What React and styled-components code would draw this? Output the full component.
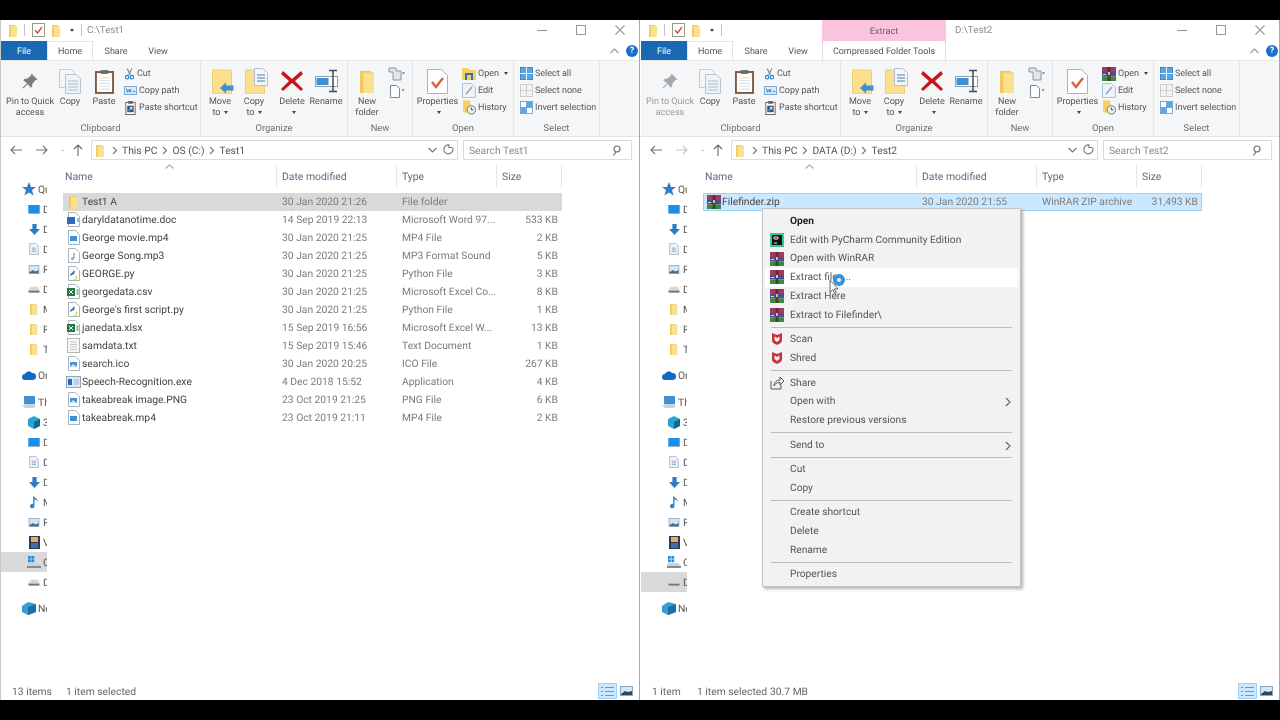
import styled, { createGlobalStyle } from "styled-components";

const GlobalStyle = createGlobalStyle`
  html, body { margin: 0; padding: 0; background: #000; }
  * { box-sizing: border-box; }
`;

const Screen = styled.div`
  width: 1280px;
  height: 720px;
  padding: 20px 0;
  background: #000;
  display: flex;
  font-family: Roboto, "Open Sans", sans-serif;
  font-size: 10.3px;
  text-rendering: geometricPrecision;
  color: #4a4a4a;
  overflow: hidden;
`;

const Window = styled.div`
  position: relative;
  width: 640px;
  height: 680px;
  background: #fff;
  display: flex;
  flex-direction: column;
  border-left: 1px solid ${(p) => (p.$right ? "#fff" : "#c8c8c8")};
  border-right: 1px solid #a8a8a8;
  filter: blur(0.45px);
`;

/* title bar */
const TitleBar = styled.div`
  height: 21px;
  flex: none;
  display: flex;
  align-items: center;
  padding-left: 8px;
  padding-bottom: 1px;
  color: #8d8d8d;
`;
const QuickBar = styled.div`
  width: 78px;
  flex: none;
  display: flex;
  align-items: center;
  gap: 7px;
`;
const Pipe = styled.span`
  width: 1px;
  height: 12px;
  background: #c4c4c4;
`;
const ContextTitle = styled.div`
  width: 124px;
  height: 21px;
  margin-left: 95px;
  flex: none;
  background: #fbc4de;
  color: #666;
  font-size: 9.2px;
  display: flex;
  align-items: center;
  justify-content: center;
  padding-top: 2px;
`;
const TitleText = styled.span`
  margin-left: ${(p) => p.$offset}px;
  font-size: 9.8px;
`;
const WinControls = styled.div`
  margin-left: auto;
  display: flex;
  align-items: center;
  height: 100%;
`;
const WinButton = styled.div`
  width: 39px;
  display: flex;
  justify-content: center;
  align-items: center;
`;

/* tabs */
const TabRow = styled.div`
  height: 19px;
  flex: none;
  display: flex;
  align-items: center;
  font-size: 9px;
`;
const Tab = styled.div`
  height: 19px;
  width: ${(p) => p.$w}px;
  display: flex;
  align-items: center;
  justify-content: center;
  padding-top: 2px;
  color: ${(p) => (p.$file ? "#fff" : "#555")};
  background: ${(p) => (p.$file ? "#1a68b4" : "#fff")};
  border: ${(p) => (p.$active ? "1px solid #e4e4e4" : "none")};
  border-bottom: none;
`;
const ContextTab = styled(Tab)`
  margin-left: 5px;
  border-left: 1px solid #ddd;
  border-right: 1px solid #ddd;
  color: #555;
  white-space: nowrap;
`;
const TabEnd = styled.div`
  margin-left: auto;
  display: flex;
  align-items: center;
  gap: 7px;
  padding-right: 1px;
`;
const Help = styled.span`
  width: 12px;
  height: 12px;
  border-radius: 50%;
  background: #1673c8;
  color: #fff;
  font-size: 9px;
  font-weight: 700;
  display: flex;
  align-items: center;
  justify-content: center;
`;

/* ribbon */
const Ribbon = styled.div`
  height: 77px;
  flex: none;
  display: flex;
  background: #f5f6f7;
  border-top: 1px solid #e8e8e8;
  border-bottom: 1px solid #e2e3e4;
  font-size: 9px;
  color: #555;
`;
const Group = styled.div`
  width: ${(p) => p.$w}px;
  flex: none;
  display: flex;
  flex-direction: column;
  border-right: 1px solid #e4e5e6;
`;
const GroupBody = styled.div`
  flex: 1;
  display: flex;
  min-height: 0;
  padding-left: ${(p) => p.$pad || 0}px;
`;
const GroupLabel = styled.div`
  height: 14px;
  text-align: center;
  color: #6e6e6e;
  line-height: 14px;
  font-size: 9.4px;
`;
const LargeButton = styled.div`
  width: ${(p) => p.$w}px;
  flex: none;
  padding-top: 5px;
  display: flex;
  flex-direction: column;
  align-items: center;
  color: ${(p) => (p.$off ? "#9a9a9a" : "#555")};
  white-space: nowrap;
`;
const LargeIcon = styled.div`
  height: 31px;
  display: flex;
  align-items: center;
  justify-content: center;
  padding-bottom: 1px;
`;
const LargeLabel = styled.div`
  line-height: 11px;
  text-align: center;
`;
const SmallColumn = styled.div`
  padding-top: 4px;
  padding-left: ${(p) => p.$pad || 0}px;
  display: flex;
  flex-direction: column;
  flex: none;
`;
const SmallButton = styled.div`
  height: 17px;
  display: flex;
  align-items: center;
  gap: 2px;
  white-space: nowrap;
`;
const Caret = styled.span`
  display: inline-block;
  width: 0;
  height: 0;
  margin-left: 3px;
  vertical-align: middle;
  border-left: 2.5px solid transparent;
  border-right: 2.5px solid transparent;
  border-top: 3px solid #444;
`;

/* address row */
const AddressRow = styled.div`
  height: 26px;
  flex: none;
  display: flex;
  align-items: center;
  padding: 0 7px 0 8px;
`;
const NavIcons = styled.div`
  width: 82px;
  flex: none;
  display: flex;
  align-items: center;
`;
const NavSlot = styled.span`
  width: ${(p) => p.$w}px;
  display: flex;
  justify-content: center;
`;
const AddressBox = styled.div`
  width: 367px;
  height: 20px;
  flex: none;
  display: flex;
  align-items: center;
  gap: 4.5px;
  padding: 0 3px 0 4px;
  border: 1px solid #dcdcdc;
  color: #555;
`;
const Crumb = styled.span`
  display: flex;
  align-items: center;
  gap: 4.5px;
  &:first-of-type {
    margin-left: 3px;
  }
`;
const AddressEnd = styled.span`
  margin-left: auto;
  display: flex;
  align-items: center;
  gap: 5px;
`;
const SearchBox = styled.div`
  width: 169px;
  height: 20px;
  margin-left: 5px;
  flex: none;
  display: flex;
  align-items: center;
  justify-content: space-between;
  padding: 0 7px 0 5px;
  border: 1px solid #dcdcdc;
  color: #8b8b8b;
`;

/* main area */
const Main = styled.div`
  flex: 1;
  min-height: 0;
  display: flex;
`;
const Sidebar = styled.div`
  width: 46px;
  flex: none;
  padding-top: 16px;
  overflow: hidden;
`;
const NavItem = styled.div`
  height: 20px;
  margin-top: ${(p) => p.$gap || 0}px;
  display: flex;
  align-items: center;
  gap: 1px;
  padding-left: ${(p) => (p.$top ? 20 : 25)}px;
  background: ${(p) => (p.$on ? "#d9d9d9" : "transparent")};
  white-space: nowrap;
  color: #555;
`;
const NavGlyph = styled.span`
  width: 16px;
  height: 16px;
  flex: none;
  display: flex;
  align-items: center;
  justify-content: center;
`;
const FileArea = styled.div`
  position: relative;
  flex: 1;
  padding: 2px 0 0 16px;
`;
const SortMark = styled.span`
  position: absolute;
  left: 118px;
  top: 1px;
  display: flex;
`;
const columns = "214px 120px 100px 65px";
const HeaderRow = styled.div`
  display: grid;
  grid-template-columns: ${columns};
  width: 499px;
  height: 23px;
  margin-bottom: 5px;
  color: #5b6c80;
  font-size: 10.4px;
`;
const HeaderCell = styled.div`
  display: flex;
  align-items: center;
  padding-left: ${(p) => (p.$first ? 2 : 5)}px;
  border-right: 1px solid #e5e5e5;
`;
const Row = styled.div`
  display: grid;
  grid-template-columns: ${columns};
  width: 499px;
  height: 18px;
  align-items: center;
  padding-bottom: 1px;
  background: ${(p) => (p.$sel === "gray" ? "#d9d9d9" : p.$sel === "blue" ? "#cce8ff" : "transparent")};
  outline: ${(p) => (p.$sel === "blue" ? "1px solid #99d1ff" : "none")};
  outline-offset: -1px;
`;
const NameCell = styled.div`
  display: flex;
  align-items: center;
  gap: 1px;
  padding-left: 3px;
  color: #444;
  white-space: nowrap;
`;
const FileGlyph = styled.span`
  width: 15px;
  height: 16px;
  flex: none;
  display: flex;
  align-items: center;
  justify-content: center;
`;
const Cell = styled.div`
  padding-left: 5px;
  white-space: nowrap;
  overflow: hidden;
  color: #7c7c7c;
`;
const SizeCell = styled(Cell)`
  text-align: right;
  padding-right: 4px;
`;

/* status bar */
const StatusBar = styled.div`
  height: 18px;
  flex: none;
  display: flex;
  align-items: center;
  padding-left: 11px;
  color: #666;
  white-space: nowrap;
`;
const StatusText = styled.span`
  width: ${(p) => p.$w}px;
  flex: none;
`;
const ViewButtons = styled.div`
  margin-left: auto;
  display: flex;
  align-items: center;
  padding-right: 3px;
`;
const ViewButton = styled.span`
  width: 19px;
  height: 16px;
  display: flex;
  align-items: center;
  justify-content: center;
  background: ${(p) => (p.$on ? "#cce8ff" : "transparent")};
  border: 1px solid ${(p) => (p.$on ? "#99d1ff" : "transparent")};
`;

/* context menu */
const Menu = styled.div`
  position: absolute;
  left: 121px;
  top: 188px;
  width: 259px;
  height: 379px;
  padding: 3px 2px;
  background: #f2f2f2;
  border: 1px solid #c4c4c4;
  box-shadow: 2px 2px 3px rgba(0, 0, 0, 0.3);
  color: #555;
  font-size: 10.2px;
  z-index: 2;
`;
const MenuItem = styled.div`
  position: relative;
  height: 18.8px;
  display: flex;
  align-items: center;
  padding-left: 25px;
  background: ${(p) => (p.$hover ? "#fff" : "transparent")};
  font-weight: ${(p) => (p.$bold ? 700 : 400)};
  color: ${(p) => (p.$bold ? "#222" : "#555")};
`;
const MenuIcon = styled.span`
  position: absolute;
  left: 5px;
  top: 2px;
  width: 14px;
  height: 14px;
  display: flex;
`;
const MenuArrow = styled.span`
  position: absolute;
  right: 7px;
  top: 5px;
  display: flex;
`;
const MenuSep = styled.div`
  height: 5.65px;
  display: flex;
  align-items: center;
  padding: 0 6px;
  &::before {
    content: "";
    flex: 1;
    height: 1px;
    background: #bdbdbd;
  }
`;
const Pointer = styled.span`
  position: absolute;
  left: 186px;
  top: 252px;
  display: flex;
  z-index: 3;
`;

/* drawings */
const Folder = ({ h = 13 }) => (
  <svg width={h * 0.62} height={h} viewBox="0 0 9 13" preserveAspectRatio="none">
    <path d="M0 1h6l2 1v11H0z" fill="#f3c95f" />
    <path d="M2 2h7v11H2z" fill="#fbe08f" />
  </svg>
);

const Check = () => (
  <svg width="13" height="14" viewBox="0 0 13 14">
    <rect x=".5" y=".5" width="12" height="13" fill="#fff" stroke="#999" />
    <path d="M3 7l2.5 3L10 4" fill="none" stroke="#d2513a" strokeWidth="1.4" />
  </svg>
);

const Pin = ({ off }) => (
  <svg width="18" height="18" viewBox="0 0 24 24">
    <path
      d="M14 2l8 8-3 1-4 5 0 3-2 2-4-5-6 6-1-1 6-6-5-4 2-2 3 0 5-4z"
      fill={off ? "#a4aab2" : "#7d7d7d"}
    />
  </svg>
);

const CopyLarge = () => (
  <svg width="22" height="26" viewBox="0 0 22 26">
    <path d="M.5 1.5h12l3 3v15H.5z" fill="#f4f7fa" stroke="#c2ccd7" />
    <path d="M6.5 6.5h11l4 4v15h-15z" fill="#eef3f8" stroke="#b5c2d0" />
    <path d="M9 13h10M9 16h10M9 19h10M9 22h10" stroke="#a9bed4" />
  </svg>
);

const PasteLarge = () => (
  <svg width="19" height="25" viewBox="0 0 20 26">
    <rect x="1" y="3" width="18" height="22" fill="#fff" stroke="#7a5a44" strokeWidth="2" />
    <rect x="6" y="1" width="8" height="4" fill="#6b6b6b" />
    <path d="M4 9h12M4 12h12M4 15h12M4 18h12M4 21h12" stroke="#d8dde3" />
  </svg>
);

const Cut = () => (
  <svg width="11" height="14" viewBox="0 0 14 14">
    <path d="M4 0l4 8M10 0L6 8" stroke="#7b8794" strokeWidth="1.4" />
    <circle cx="4" cy="11" r="2.2" fill="none" stroke="#2f7dc4" strokeWidth="1.4" />
    <circle cx="10" cy="11" r="2.2" fill="none" stroke="#2f7dc4" strokeWidth="1.4" />
  </svg>
);

const CopyPath = () => (
  <svg width="13" height="9" viewBox="0 0 15 10">
    <rect x=".5" y=".5" width="14" height="9" fill="#dcecf9" stroke="#6a9fd0" />
    <path d="M3 3l1 4 1.5-3L7 7l1-4" fill="none" stroke="#2b6aa6" />
    <path d="M10 6h3" stroke="#2b6aa6" />
  </svg>
);

const PasteShortcut = () => (
  <svg width="13" height="14" viewBox="0 0 13 15">
    <rect x="1.5" y="1.500" width="10" height="13" fill="#fff" stroke="#7a5a44" />
    <rect x="4" y="0" width="5" height="3" fill="#666" />
    <rect x="3" y="5" width="7" height="7" fill="#2f5d8c" />
    <path d="M5 10l3-3M6 7h2v2" stroke="#fff" fill="none" />
  </svg>
);

const MoveTo = () => (
  <svg width="28" height="25" viewBox="0 0 28 25">
    <rect x="6.500" y="1" width="19" height="24" fill="#fbe08f" stroke="#f0cd72" />
    <path d="M14 19l6-5.500v3h7.500v5H20v3z" fill="#3d8fd6" />
  </svg>
);

const CopyTo = () => (
  <svg width="28" height="26" viewBox="0 0 28 26">
    <rect x="5.500" y="2" width="19" height="24" fill="#fbe08f" stroke="#f0cd72" />
    <path d="M14.500.5h8l5 4v13h-13z" fill="#f4f7fa" stroke="#b3bfcc" />
    <path d="M17 7h8M17 10h8M17 13h8" stroke="#7fa6cc" strokeWidth="1.4" />
  </svg>
);

const DeleteX = () => (
  <svg width="22" height="22" viewBox="0 0 22 22">
    <path d="M2 1l9 8 9-8 2 3-8 7 8 8-2 2-9-8-9 8-2-2 8-8-8-7z" fill="#c9141e" />
  </svg>
);

const RenameIcon = () => (
  <svg width="26" height="24" viewBox="0 0 26 24">
    <rect x="2.500" y="7.500" width="22" height="10" fill="#fff" stroke="#8aa0b5" />
    <rect x="3.500" y="9" width="12" height="7" fill="#3d8fd6" />
    <path d="M16 1.500h8M20 1.500v21M16 22.500h8" stroke="#4a4a4a" strokeWidth="1.5" fill="none" />
  </svg>
);

const NewItem = () => (
  <svg width="17" height="14" viewBox="0 0 17 14">
    <path d="M1 1h7v3h5v9H5V5H1z" fill="#dfe6ed" stroke="#8c98a5" />
    <path d="M14 5.500h3l-1.500 1.500z" fill="#444" />
  </svg>
);

const EasyAccess = () => (
  <svg width="17" height="14" viewBox="0 0 17 14">
    <path d="M2.5 1.5h6l3 3v9h-9z" fill="#fff" stroke="#7a8794" />
    <path d="M13.5 5.5l3 0-1.5 1.5z" fill="#444" />
  </svg>
);

const Properties = () => (
  <svg width="21" height="25" viewBox="0 0 21 25">
    <path d="M.5.5h14l6 6v18H.5z" fill="#fff" stroke="#a8b3bf" />
    <path d="M5 13l4 5 7-9" fill="none" stroke="#d9603f" strokeWidth="2.4" />
  </svg>
);

const OpenFolder = () => (
  <svg width="14" height="13" viewBox="0 0 14 13">
    <path d="M0 1h6l2 2h6v10H0z" fill="#f5cf6b" />
    <path d="M3 6h8v7H9V8H5v5H3z" fill="#2f7a8c" />
  </svg>
);

const WinRar = ({ s = 14 }) => (
  <svg width={s} height={s} viewBox="0 0 14 14">
    <rect x="0" y="0" width="14" height="5" fill="#a33a5c" />
    <rect x="0" y="5" width="14" height="4.5" fill="#4d4aa0" />
    <rect x="0" y="9.5" width="14" height="4.5" fill="#3d8a3a" />
    <rect x="5.500" y="0" width="3" height="14" fill="#3a2530" opacity=".65" />
    <rect x="6" y="5" width="2" height="3" fill="#e8c850" />
    <rect x="1" y="7" width="3" height="1" fill="#d7d7e8" />
  </svg>
);

const EditIcon = () => (
  <svg width="14" height="15" viewBox="0 0 14 15">
    <path d="M.5.5h9l4 4v10H.5z" fill="#eef3f8" stroke="#a9c3dc" />
    <path d="M4 11l6-7" stroke="#7fa6cc" strokeWidth="1.4" />
  </svg>
);

const HistoryIcon = () => (
  <svg width="14" height="15" viewBox="0 0 15 15">
    <rect x="1" y="0" width="8" height="13" fill="#f5cf6b" />
    <circle cx="10" cy="10" r="4.5" fill="#e8f0e8" stroke="#4b8a4b" />
    <path d="M10 7.5V10h2" stroke="#444" fill="none" />
  </svg>
);

const SelectAll = () => (
  <svg width="13" height="13" viewBox="0 0 15 15">
    <rect x=".5" y=".5" width="14" height="14" fill="#5aa6e0" stroke="#2f7dc4" />
    <path d="M7.5 0v15M0 7.5h15" stroke="#fff" />
  </svg>
);

const SelectNone = () => (
  <svg width="13" height="13" viewBox="0 0 15 15">
    <rect x=".5" y=".5" width="14" height="14" fill="#f4f4f4" stroke="#c4c8cc" />
    <path d="M7.5 0v15M0 7.5h15" stroke="#c4c8cc" />
  </svg>
);

const Invert = () => (
  <svg width="13" height="13" viewBox="0 0 15 15">
    <rect x=".5" y=".5" width="14" height="14" fill="#fff" stroke="#5f9ed6" />
    <rect x="8" y="1" width="6" height="6" fill="#5aa6e0" />
    <rect x="1" y="8" width="6" height="6" fill="#5aa6e0" />
    <path d="M7.5 0v15M0 7.5h15" stroke="#5f9ed6" />
  </svg>
);

const Line = ({ w = 16, h = 12, d, color = "#666", sw = 1.1 }) => (
  <svg width={w} height={h} viewBox={`0 0 ${w} ${h}`}>
    <path d={d} fill="none" stroke={color} strokeWidth={sw} />
  </svg>
);

const Page = ({ children, line = "#aab4bf" }) => (
  <svg width="13" height="15" viewBox="0 0 13 15">
    <path d="M1.5.5h7l4 4v10h-11z" fill="#fff" stroke={line} />
    {children}
  </svg>
);

const fileIcons = {
  folder: <Folder h={14} />,
  word: (
    <Page>
      <rect x="0" y="5" width="8" height="7" fill="#2b6cb8" />
      <path d="M10 7h2M10 9h2" stroke="#2b6cb8" />
    </Page>
  ),
  video: (
    <Page>
      <rect x="3" y="6" width="7" height="5" fill="#3d8fd6" />
    </Page>
  ),
  audio: (
    <Page>
      <path d="M7 5v5" stroke="#5f7c9a" />
      <circle cx="5.5" cy="10.5" r="1.6" fill="#8fb0d0" />
    </Page>
  ),
  python: (
    <Page>
      <path d="M3 10c0-3 3-3 4-6 1 1 1 3 0 4z" fill="#3b75ac" />
      <path d="M5 14c3 0 4-2 4-5 2 1 1 5-1 5z" fill="#f0c63c" />
    </Page>
  ),
  excel: (
    <Page>
      <rect x="0" y="4" width="8" height="8" fill="#1f7a45" />
      <path d="M2 6l4 4M6 6l-4 4" stroke="#fff" />
      <path d="M9.5 6h2M9.5 8h2M9.5 10h2" stroke="#1f7a45" />
    </Page>
  ),
  text: (
    <svg width="13" height="15" viewBox="0 0 13 15">
      <rect x=".5" y=".5" width="12" height="14" fill="#f8f8f8" stroke="#b7b7b7" />
      <path d="M3 4h7M3 6.500h7M3 9h7M3 11.500h7" stroke="#c8c8c8" />
    </svg>
  ),
  image: (
    <Page>
      <rect x="3" y="6" width="7" height="5" fill="#4a8fcf" />
      <path d="M3 11l3-3 4 3z" fill="#cfe3f5" />
    </Page>
  ),
  exe: (
    <svg width="15" height="12" viewBox="0 0 15 12">
      <rect x=".5" y=".5" width="14" height="11" fill="#dfe8f2" stroke="#8ea6bf" />
      <rect x="2" y="3" width="4" height="6" fill="#2b6cb8" />
      <path d="M8 4h5M8 6h5M8 8h5" stroke="#9db4cc" />
    </svg>
  ),
  rar: <WinRar />,
};

const navIcons = {
  star: (
    <svg width="14" height="14" viewBox="0 0 14 14">
      <path d="M7 0l2 5h5l-4 3 1.600 5.500L7 10.500 2.400 13.500 4 8 0 5h5z" fill="#2f7dc4" />
    </svg>
  ),
  desktop: (
    <svg width="12" height="9" viewBox="0 0 14 11">
      <rect width="14" height="10" fill="#1b8fe8" />
      <rect y="10" width="14" height="1" fill="#8fa4b8" />
    </svg>
  ),
  down: (
    <svg width="11" height="11" viewBox="0 0 13 13">
      <path d="M4 0h5v6h4l-6.500 7L0 6h4z" fill="#2f7dc4" />
    </svg>
  ),
  docs: (
    <svg width="10" height="12" viewBox="0 0 11 14">
      <path d="M.5.5h7l3 3v10H.5z" fill="#eef3f8" stroke="#a4b2c0" />
      <path d="M3 6h5M3 8h5M3 10h5" stroke="#8fa6bd" />
    </svg>
  ),
  pics: (
    <svg width="12" height="9" viewBox="0 0 13 11">
      <rect x=".5" y=".5" width="12" height="10" fill="#d6e6f4" stroke="#8ea6bf" />
      <path d="M1 9l4-3 3 2 4-2v4H1z" fill="#4a6a82" />
    </svg>
  ),
  drive: (
    <svg width="12" height="7" viewBox="0 0 14 9">
      <path d="M3 1h9l2 4v3H0V5z" fill="#d8d8d8" />
      <rect y="6" width="14" height="2.500" fill="#777" />
    </svg>
  ),
  folder: <Folder h={12} />,
  cloud: (
    <svg width="14" height="9" viewBox="0 0 14 9">
      <path d="M3 9a3 3 0 010-6 4 4 0 017-1 3.500 3.500 0 011 7z" fill="#0f6cbd" />
    </svg>
  ),
  pc: (
    <svg width="14" height="14" viewBox="0 0 14 14">
      <rect x="2" y="1" width="11" height="8" fill="#3d8fd6" />
      <path d="M0 11l4-2h8l2 2-2 2H3z" fill="#c8d2dc" />
    </svg>
  ),
  cube: (
    <svg width="12" height="13" viewBox="0 0 12 13">
      <path d="M6 0l6 3v7l-6 3-6-3V3z" fill="#2aa3d6" />
      <path d="M6 6l6-3v7l-6 3z" fill="#14688e" />
    </svg>
  ),
  music: (
    <svg width="9" height="13" viewBox="0 0 10 14">
      <path d="M3.500 0h1.300c.3 2 4 3 4.200 6-1-1-2.500-2-4-2.300V11a2.500 2.500 0 11-1.500-2.300z" fill="#2f86d6" />
    </svg>
  ),
  video: (
    <svg width="11" height="13" viewBox="0 0 11 13">
      <rect width="11" height="13" fill="#2d3d58" />
      <rect x="2" y="1" width="7" height="5" fill="#e0b060" />
      <rect x="2" y="7" width="7" height="5" fill="#3a6fb0" />
    </svg>
  ),
  windrive: (
    <svg width="14" height="13" viewBox="0 0 14 13">
      <rect x="1" y="0" width="2.800" height="2.800" fill="#1b8fe8" />
      <rect x="4.400" y="0" width="2.800" height="2.800" fill="#1b8fe8" />
      <rect x="1" y="3.400" width="2.800" height="2.800" fill="#1b8fe8" />
      <rect x="4.400" y="3.400" width="2.800" height="2.800" fill="#1b8fe8" />
      <path d="M1 7h10l3 3v2H0v-3z" fill="#d0d0d0" />
      <rect y="10" width="14" height="2" fill="#8a8a8a" />
    </svg>
  ),
  net: (
    <svg width="14" height="13" viewBox="0 0 14 13">
      <path d="M6 0l8 2v8l-8 3-6-3V4z" fill="#3d9ad6" />
      <path d="M6 5l8-3v8l-8 3z" fill="#1f6ea8" />
    </svg>
  ),
};

const navRows = [
  { icon: "star", text: "Quick access", top: true },
  { icon: "desktop", text: "Desktop" },
  { icon: "down", text: "Downloads" },
  { icon: "docs", text: "Documents" },
  { icon: "pics", text: "Pictures" },
  { icon: "drive", text: "DATA (D:)" },
  { icon: "folder", text: "Music" },
  { icon: "folder", text: "Python" },
  { icon: "folder", text: "Test" },
  { icon: "cloud", text: "OneDrive", top: true, gap: 6.5 },
  { icon: "pc", text: "This PC", top: true, gap: 6.5 },
  { icon: "cube", text: "3D Objects" },
  { icon: "desktop", text: "Desktop" },
  { icon: "docs", text: "Documents" },
  { icon: "down", text: "Downloads" },
  { icon: "music", text: "Music" },
  { icon: "pics", text: "Pictures" },
  { icon: "video", text: "Videos" },
  { icon: "windrive", text: "OS (C:)", sel: "left" },
  { icon: "drive", text: "DATA (D:)", sel: "right" },
  { icon: "net", text: "Network", top: true, gap: 6 },
];

const leftFiles = [
  ["folder", "Test1 A", "30 Jan 2020 21:26", "File folder", ""],
  ["word", "daryldatanotime.doc", "14 Sep 2019 22:13", "Microsoft Word 97...", "533 KB"],
  ["video", "George movie.mp4", "30 Jan 2020 21:25", "MP4 File", "2 KB"],
  ["audio", "George Song.mp3", "30 Jan 2020 21:25", "MP3 Format Sound", "5 KB"],
  ["python", "GEORGE.py", "30 Jan 2020 21:25", "Python File", "3 KB"],
  ["excel", "georgedata.csv", "30 Jan 2020 21:25", "Microsoft Excel Co...", "8 KB"],
  ["python", "George's first script.py", "30 Jan 2020 21:25", "Python File", "1 KB"],
  ["excel", "janedata.xlsx", "15 Sep 2019 16:56", "Microsoft Excel W...", "13 KB"],
  ["text", "samdata.txt", "15 Sep 2019 15:46", "Text Document", "1 KB"],
  ["image", "search.ico", "30 Jan 2020 20:25", "ICO File", "267 KB"],
  ["exe", "Speech-Recognition.exe", "4 Dec 2018 15:52", "Application", "4 KB"],
  ["image", "takeabreak image.PNG", "23 Oct 2019 21:25", "PNG File", "6 KB"],
  ["video", "takeabreak.mp4", "23 Oct 2019 21:11", "MP4 File", "2 KB"],
];

const rightFiles = [["rar", "Filefinder.zip", "30 Jan 2020 21:55", "WinRAR ZIP archive", "31,493 KB"]];

const Shield = () => (
  <svg width="14" height="14" viewBox="0 0 14 14">
    <path d="M2 1l5 2 5-2v7c0 3-3 4-5 5-2-1-5-2-5-5z" fill="#c8323c" />
    <path d="M4.500 4.500L7 6l2.500-1.500V8L7 10 4.500 8z" fill="#f2f2f2" />
  </svg>
);

const ShareIcon = () => (
  <svg width="14" height="14" viewBox="0 0 14 14">
    <path d="M1 5v8h10V9M4 10c0-4 3-6 6-6V1l4 4-4 4V6.500c-3 0-5 1-6 3.500z" fill="none" stroke="#555" />
  </svg>
);

const PyCharm = () => (
  <svg width="14" height="14" viewBox="0 0 14 14">
    <rect width="14" height="14" fill="#35c6a0" />
    <rect x="2" y="2" width="10" height="10" fill="#111" />
    <path d="M4 4h4v2H4zM4 10h3" stroke="#eee" />
  </svg>
);

const menuRows = [
  { text: "Open", bold: true },
  { text: "Edit with PyCharm Community Edition", icon: <PyCharm /> },
  { text: "Open with WinRAR", icon: <WinRar /> },
  { text: "Extract files...", icon: <WinRar />, hover: true },
  { text: "Extract Here", icon: <WinRar /> },
  { text: "Extract to Filefinder\\", icon: <WinRar /> },
  "sep",
  { text: "Scan", icon: <Shield /> },
  { text: "Shred", icon: <Shield /> },
  "sep",
  { text: "Share", icon: <ShareIcon /> },
  { text: "Open with", arrow: true },
  { text: "Restore previous versions" },
  "sep",
  { text: "Send to", arrow: true },
  "sep",
  { text: "Cut" },
  { text: "Copy" },
  "sep",
  { text: "Create shortcut" },
  { text: "Delete" },
  { text: "Rename" },
  "sep",
  { text: "Properties" },
];

function RibbonBar({ right }) {
  return (
    <Ribbon>
      <Group $w={200}>
        <GroupBody $pad={3}>
          <LargeButton $w={52} $off={right}>
            <LargeIcon>
              <Pin off={right} />
            </LargeIcon>
            <LargeLabel>Pin to Quick</LargeLabel>
            <LargeLabel>access</LargeLabel>
          </LargeButton>
          <LargeButton $w={28}>
            <LargeIcon>
              <CopyLarge />
            </LargeIcon>
            <LargeLabel>Copy</LargeLabel>
          </LargeButton>
          <LargeButton $w={40}>
            <LargeIcon>
              <PasteLarge />
            </LargeIcon>
            <LargeLabel>Paste</LargeLabel>
          </LargeButton>
          <SmallColumn>
            <SmallButton><Cut />Cut</SmallButton>
            <SmallButton><CopyPath />Copy path</SmallButton>
            <SmallButton><PasteShortcut />Paste shortcut</SmallButton>
          </SmallColumn>
        </GroupBody>
        <GroupLabel>Clipboard</GroupLabel>
      </Group>
      <Group $w={147}>
        <GroupBody $pad={2}>
          <LargeButton $w={34}>
            <LargeIcon>
              <MoveTo />
            </LargeIcon>
            <LargeLabel>Move</LargeLabel>
            <LargeLabel>to<Caret /></LargeLabel>
          </LargeButton>
          <LargeButton $w={34}>
            <LargeIcon>
              <CopyTo />
            </LargeIcon>
            <LargeLabel>Copy</LargeLabel>
            <LargeLabel>to<Caret /></LargeLabel>
          </LargeButton>
          <LargeButton $w={42}>
            <LargeIcon>
              <DeleteX />
            </LargeIcon>
            <LargeLabel>Delete</LargeLabel>
            <LargeLabel><Caret /></LargeLabel>
          </LargeButton>
          <LargeButton $w={26}>
            <LargeIcon>
              <RenameIcon />
            </LargeIcon>
            <LargeLabel>Rename</LargeLabel>
          </LargeButton>
        </GroupBody>
        <GroupLabel>Organize</GroupLabel>
      </Group>
      <Group $w={65}>
        <GroupBody $pad={3}>
          <LargeButton $w={32}>
            <LargeIcon>
              <Folder h={24} />
            </LargeIcon>
            <LargeLabel>New</LargeLabel>
            <LargeLabel>folder</LargeLabel>
          </LargeButton>
          <SmallColumn $pad={5}>
            <SmallButton><NewItem /></SmallButton>
            <SmallButton><EasyAccess /></SmallButton>
          </SmallColumn>
        </GroupBody>
        <GroupLabel>New</GroupLabel>
      </Group>
      <Group $w={101}>
        <GroupBody>
          <LargeButton $w={49}>
            <LargeIcon>
              <Properties />
            </LargeIcon>
            <LargeLabel>Properties</LargeLabel>
            <LargeLabel><Caret /></LargeLabel>
          </LargeButton>
          <SmallColumn>
            <SmallButton>{right ? <WinRar /> : <OpenFolder />}Open<Caret /></SmallButton>
            <SmallButton><EditIcon />Edit</SmallButton>
            <SmallButton><HistoryIcon />History</SmallButton>
          </SmallColumn>
        </GroupBody>
        <GroupLabel>Open</GroupLabel>
      </Group>
      <Group $w={86}>
        <GroupBody $pad={6}>
          <SmallColumn>
            <SmallButton><SelectAll />Select all</SmallButton>
            <SmallButton><SelectNone />Select none</SmallButton>
            <SmallButton><Invert />Invert selection</SmallButton>
          </SmallColumn>
        </GroupBody>
        <GroupLabel>Select</GroupLabel>
      </Group>
    </Ribbon>
  );
}

const Sep = () => <Line w={6} h={9} d="M1 1l3.500 3.500L1 8" color="#777" />;

function ExplorerWindow({ right, title, crumbs, search, files, selected, status }) {
  return (
    <Window $right={right}>
      <TitleBar>
        <QuickBar>
          <Folder />
          <Pipe />
          <Check />
          <Folder />
          <Caret />
          <Pipe />
        </QuickBar>
        {right && <ContextTitle>Extract</ContextTitle>}
        <TitleText $offset={right ? 9 : 0}>{title}</TitleText>
        <WinControls>
          <WinButton><Line w={10} h={3} d="M0 1.500h10" color="#999" /></WinButton>
          <WinButton><Line w={10} h={10} d="M.5.5h9v9h-9z" color="#999" /></WinButton>
          <WinButton><Line w={10} h={10} d="M.5.5l9 9M9.500.5l-9 9" color="#999" /></WinButton>
        </WinControls>
      </TitleBar>
      <TabRow>
        <Tab $w={46} $file>File</Tab>
        <Tab $w={46} $active>Home</Tab>
        <Tab $w={46}>Share</Tab>
        <Tab $w={38}>View</Tab>
        {right && <ContextTab $w={124}>Compressed Folder Tools</ContextTab>}
        <TabEnd>
          <Line w={9} h={6} d="M.5 5L4.500 1l4 4" color="#999" />
          <Help>?</Help>
        </TabEnd>
      </TabRow>
      <RibbonBar right={right} />
      <AddressRow>
        <NavIcons>
          <NavSlot $w={14}><Line w={12} h={10} d="M12 5H1M5 1L1 5l4 4" color="#777" /></NavSlot>
          <NavSlot $w={38}>
            <Line w={12} h={10} d="M0 5h11M7 1l4 4-4 4" color={right ? "#c4c4c4" : "#777"} />
          </NavSlot>
          <NavSlot $w={3}><Line w={7} h={5} d="M.5 1l3 3 3-3" color="#777" /></NavSlot>
          <NavSlot $w={27}><Line w={10} h={12} d="M5 12V1M1 5l4-4 4 4" color="#666" /></NavSlot>
        </NavIcons>
        <AddressBox>
          <Folder />
          {crumbs.map((c) => (
            <Crumb key={c}>
              <Sep />
              {c}
            </Crumb>
          ))}
          <AddressEnd>
            <Line w={9} h={6} d="M.5 1l4 4 4-4" color="#777" />
            <Line w={12} h={12} d="M10.500 3.500a4.500 4.500 0 11-3-2.500M7 .5v3h3" color="#777" />
          </AddressEnd>
        </AddressBox>
        <SearchBox>
          {search}
          <Line w={11} h={11} d="M7 4a3 3 0 11-6 0 3 3 0 016 0zM3 7L.5 10.500" color="#666" sw={1.2} />
        </SearchBox>
      </AddressRow>
      <Main>
        <Sidebar>
          {navRows.map((n, i) => (
            <NavItem key={i} $top={n.top} $gap={n.gap} $on={n.sel === (right ? "right" : "left")}>
              <NavGlyph>{navIcons[n.icon]}</NavGlyph>
              {n.text}
            </NavItem>
          ))}
        </Sidebar>
        <FileArea>
          <SortMark><Line w={9} h={5} d="M.5 4.500L4.500 1l4 3.500" color="#aaa" /></SortMark>
          <HeaderRow>
            <HeaderCell $first>Name</HeaderCell>
            <HeaderCell>Date modified</HeaderCell>
            <HeaderCell>Type</HeaderCell>
            <HeaderCell>Size</HeaderCell>
          </HeaderRow>
          {files.map((f, i) => (
            <Row key={f[1]} $sel={i === 0 ? selected : ""}>
              <NameCell>
                <FileGlyph>{fileIcons[f[0]]}</FileGlyph>
                {f[1]}
              </NameCell>
              <Cell>{f[2]}</Cell>
              <Cell>{f[3]}</Cell>
              <SizeCell>{f[4]}</SizeCell>
            </Row>
          ))}
        </FileArea>
      </Main>
      <StatusBar>
        {status.map((s) => (
          <StatusText key={s.text} $w={s.w}>{s.text}</StatusText>
        ))}
        <ViewButtons>
          <ViewButton $on><Line w={13} h={11} d="M0 1.500h2M4 1.500h9M0 5.500h2M4 5.500h9M0 9.500h2M4 9.500h9" color="#7a93aa" /></ViewButton>
          <ViewButton>
            <svg width="13" height="10" viewBox="0 0 13 10">
              <rect x=".5" y=".5" width="12" height="9" fill="#d6e6f4" stroke="#8ea6bf" />
              <path d="M1 8l4-3 3 1 4-1v4H1z" fill="#2e4a63" />
            </svg>
          </ViewButton>
        </ViewButtons>
      </StatusBar>
      {right && (
        <>
          <Menu>
            {menuRows.map((m, i) =>
              m === "sep" ? (
                <MenuSep key={i} />
              ) : (
                <MenuItem key={i} $hover={m.hover} $bold={m.bold}>
                  {m.icon && <MenuIcon>{m.icon}</MenuIcon>}
                  {m.text}
                  {m.arrow && (
                    <MenuArrow><Line w={6} h={10} d="M1 1l4 4-4 4" color="#666" /></MenuArrow>
                  )}
                </MenuItem>
              )
            )}
          </Menu>
          <Pointer>
            <svg width="20" height="22" viewBox="0 0 20 22">
              <path d="M3 8v12l2.800-2.500 2 3.800 1.500-.8-2-3.600H11z" fill="#fff" stroke="#444" strokeWidth=".8" />
              <circle cx="12" cy="8" r="6" fill="#3d8fe0" />
              <circle cx="12" cy="8" r="2" fill="#e8f2fb" />
            </svg>
          </Pointer>
        </>
      )}
    </Window>
  );
}

export default function App() {
  return (
    <>
      <GlobalStyle />
      <Screen>
        <ExplorerWindow
          title="C:\Test1"
          crumbs={["This PC", "OS (C:)", "Test1"]}
          search="Search Test1"
          files={leftFiles}
          selected="gray"
          status={[
            { text: "13 items", w: 54 },
            { text: "1 item selected", w: 90 },
          ]}
        />
        <ExplorerWindow
          right
          title="D:\Test2"
          crumbs={["This PC", "DATA (D:)", "Test2"]}
          search="Search Test2"
          files={rightFiles}
          selected="blue"
          status={[
            { text: "1 item", w: 45 },
            { text: "1 item selected", w: 73 },
            { text: "30.7 MB", w: 50 },
          ]}
        />
      </Screen>
    </>
  );
}
